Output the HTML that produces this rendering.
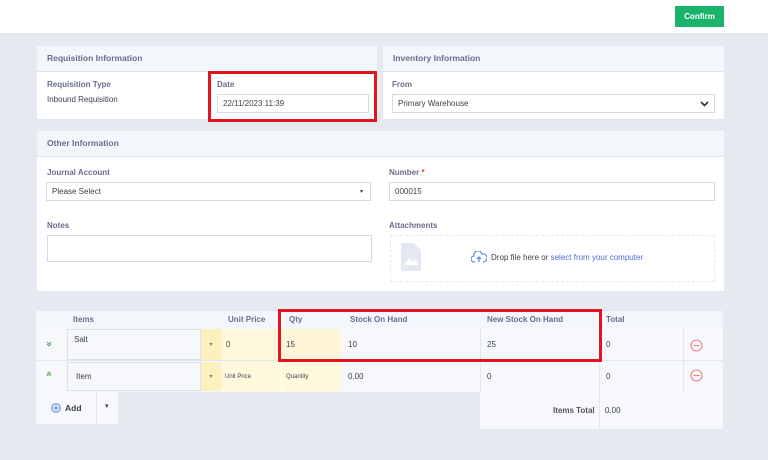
<!DOCTYPE html>
<html><head><meta charset="utf-8"><style>
*{box-sizing:border-box;margin:0;padding:0}
body{width:768px;height:460px;background:#e5eaf1;font-family:"Liberation Sans",sans-serif;font-size:8px;color:#3b3f4c;position:relative;overflow:hidden}
.a{position:absolute}
.hdr{background:#f3f6fa;border-bottom:1px solid #dde3ec;color:#6a6d8c;font-weight:bold;font-size:8.5px;padding-left:10px;line-height:25px}
.pan{background:#fff}
.lbl{color:#6a6d8c;font-weight:bold;font-size:8px}
.inp{background:#fff;border:1px solid #d6dae2;font-size:8px;padding-left:5px;display:flex;align-items:center}
.red{border:3px solid #e3141f}
.cell{position:absolute;display:flex;align-items:center;padding-left:5px;font-size:8px}
</style></head><body>
<div class="a" style="left:0;top:0;width:768px;height:34px;background:#fff;border-bottom:1px solid #dfe4ec"></div>
<div class="a" style="left:675px;top:6px;width:49px;height:21px;background:#19b36b;color:#fff;font-weight:bold;font-size:8px;display:flex;align-items:center;justify-content:center">Confirm</div>

<div class="a pan" style="left:37px;top:46px;width:340px;height:73px"><div class="hdr">Requisition Information</div></div>
<div class="a lbl" style="left:47px;top:80px">Requisition Type</div>
<div class="a" style="left:47px;top:95px;font-size:8px">Inbound Requisition</div>
<div class="a lbl" style="left:217px;top:80px">Date</div>
<div class="a inp" style="left:217px;top:94px;width:152px;height:19px">22/11/2023 11:39</div>
<div class="a red" style="left:208px;top:71px;width:169px;height:51px"></div>

<div class="a pan" style="left:383px;top:46px;width:341px;height:73px"><div class="hdr">Inventory Information</div></div>
<div class="a lbl" style="left:392px;top:80px">From</div>
<div class="a inp" style="left:392px;top:94px;width:323px;height:19px">Primary Warehouse<svg style="position:absolute;right:5px;top:6px" width="9" height="6"><path d="M1 1L4.5 4.5L8 1" fill="none" stroke="#333" stroke-width="1.6"/></svg></div>

<div class="a pan" style="left:37px;top:131px;width:687px;height:160px"><div class="hdr">Other Information</div></div>
<div class="a lbl" style="left:47px;top:168px">Journal Account</div>
<div class="a inp" style="left:46px;top:182px;width:325px;height:19px">Please Select<span style="position:absolute;right:7px;font-size:6px">&#9662;</span></div>
<div class="a lbl" style="left:389px;top:168px">Number <span style="color:#e33">*</span></div>
<div class="a inp" style="left:389px;top:182px;width:326px;height:19px">000015</div>
<div class="a lbl" style="left:47px;top:221px">Notes</div>
<div class="a inp" style="left:47px;top:235px;width:325px;height:27px"></div>
<div class="a lbl" style="left:389px;top:221px">Attachments</div>
<div class="a" style="left:390px;top:235px;width:325px;height:47px;border:1px dashed #e3e7ee"></div>
<svg class="a" style="left:401px;top:243px" width="20" height="28"><path d="M0 0H13L20 7V28H0Z" fill="#e3e8f1"/><path d="M3 22L8 15L12 19L15 16L17 22Z" fill="#fff"/></svg>
<svg class="a" style="left:471px;top:251px" width="16" height="12"><path d="M4 11H3A3 3 0 0 1 3 5A4 4 0 0 1 11 3A3.5 3.5 0 0 1 13 11H12M8 11V6M6 8L8 6L10 8" fill="none" stroke="#4a7fd6" stroke-width="1.1"/></svg>
<div class="a" style="left:491px;top:253px;font-size:8px">Drop file here or <span style="color:#4a6fd6">select from your computer</span></div>

<div class="a" style="left:36px;top:311px;width:687px;height:18px;background:#f3f6fa"></div>
<div class="a" style="left:36px;top:329px;width:687px;height:63px;background:#f6f8fb"></div>
<div class="a" style="left:36px;top:360px;width:687px;height:1px;background:#e2e6ed"></div>
<div class="a" style="left:36px;top:392px;width:82px;height:32px;background:#f6f8fb"></div>
<div class="a" style="left:96px;top:392px;width:1px;height:32px;background:#e2e6ed"></div>
<div class="a" style="left:480px;top:392px;width:243px;height:37px;background:#f6f8fb"></div>
<div class="a" style="left:599px;top:329px;width:1px;height:100px;background:#e2e6ed"></div>
<div class="a" style="left:683px;top:329px;width:1px;height:63px;background:#e2e6ed"></div>
<div class="a" style="left:480px;top:329px;width:1px;height:63px;background:#e2e6ed"></div>
<div class="a lbl" style="left:73px;top:315px">Items</div>
<div class="a lbl" style="left:228px;top:315px">Unit Price</div>
<div class="a lbl" style="left:289px;top:315px">Qty</div>
<div class="a lbl" style="left:350px;top:315px">Stock On Hand</div>
<div class="a lbl" style="left:487px;top:315px">New Stock On Hand</div>
<div class="a lbl" style="left:606px;top:315px">Total</div>

<svg class="a" style="left:46px;top:341px" width="6" height="6"><path d="M1 1L3 3L5 1M1 3L3 5L5 3" fill="none" stroke="#5caa5c" stroke-width="0.9"/></svg>
<svg class="a" style="left:46px;top:371px" width="6" height="6"><path d="M1 5L3 3L5 5M1 3L3 1L5 3" fill="none" stroke="#5caa5c" stroke-width="0.9"/></svg>
<div class="a" style="left:67px;top:329px;width:134px;height:31px;background:#f6f8fb;border:1px solid #dde1e8;padding:5px 6px;font-size:8px">Salt</div>
<div class="a" style="left:67px;top:362px;width:134px;height:29px;background:#f6f8fb;border:1px solid #dde1e8;padding:9px 8px;font-size:8px">Item</div>
<div class="a" style="left:201px;top:329px;width:20px;height:31px;background:#fdf0bf;color:#777;font-size:6px;display:flex;align-items:center;justify-content:center">&#9662;</div>
<div class="a" style="left:201px;top:362px;width:20px;height:29px;background:#fdf0bf;color:#777;font-size:6px;display:flex;align-items:center;justify-content:center">&#9662;</div>
<div class="cell" style="left:221px;top:329px;width:120px;height:31px;background:#fff8dc">0</div>
<div class="cell" style="left:221px;top:361px;width:120px;height:31px;background:#fff8dc"></div>
<div class="cell" style="left:281px;top:329px;width:60px;height:31px;background:#fff6d8">15</div>
<div class="a" style="left:281px;top:361px;width:1px;height:31px;background:#fff"></div>
<div class="a" style="left:225px;top:374px;font-size:6px">Unit Price</div>
<div class="a" style="left:286px;top:374px;font-size:6px">Quantity</div>
<div class="cell" style="left:343px;top:329px;height:31px">10</div>
<div class="cell" style="left:343px;top:361px;height:31px">0.00</div>
<div class="cell" style="left:482px;top:329px;height:31px">25</div>
<div class="cell" style="left:482px;top:361px;height:31px">0</div>
<div class="cell" style="left:601px;top:329px;height:31px">0</div>
<div class="cell" style="left:601px;top:361px;height:31px">0</div>
<svg class="a" style="left:690px;top:339px" width="13" height="13"><circle cx="6.5" cy="6.5" r="5.5" fill="none" stroke="#ee8088" stroke-width="1.1"/><path d="M3.5 6.5H9.5" stroke="#ee8088" stroke-width="1.1"/></svg>
<svg class="a" style="left:690px;top:369px" width="13" height="13"><circle cx="6.5" cy="6.5" r="5.5" fill="none" stroke="#ee8088" stroke-width="1.1"/><path d="M3.5 6.5H9.5" stroke="#ee8088" stroke-width="1.1"/></svg>
<svg class="a" style="left:51px;top:403px" width="10" height="10"><circle cx="5" cy="5" r="4.2" fill="none" stroke="#4a7fd6" stroke-width="1"/><path d="M5 2.5V7.5M2.5 5H7.5" stroke="#4a7fd6"/></svg>
<div class="a" style="left:65px;top:403px;font-weight:bold;font-size:8.5px">Add</div>
<div class="a" style="left:105px;top:402px;font-size:7px">&#9662;</div>
<div class="a lbl" style="left:553px;top:406px;color:#555">Items Total</div>
<div class="a" style="left:605px;top:406px">0.00</div>
<div class="a red" style="left:278px;top:309px;width:324px;height:53px"></div>
</body></html>
